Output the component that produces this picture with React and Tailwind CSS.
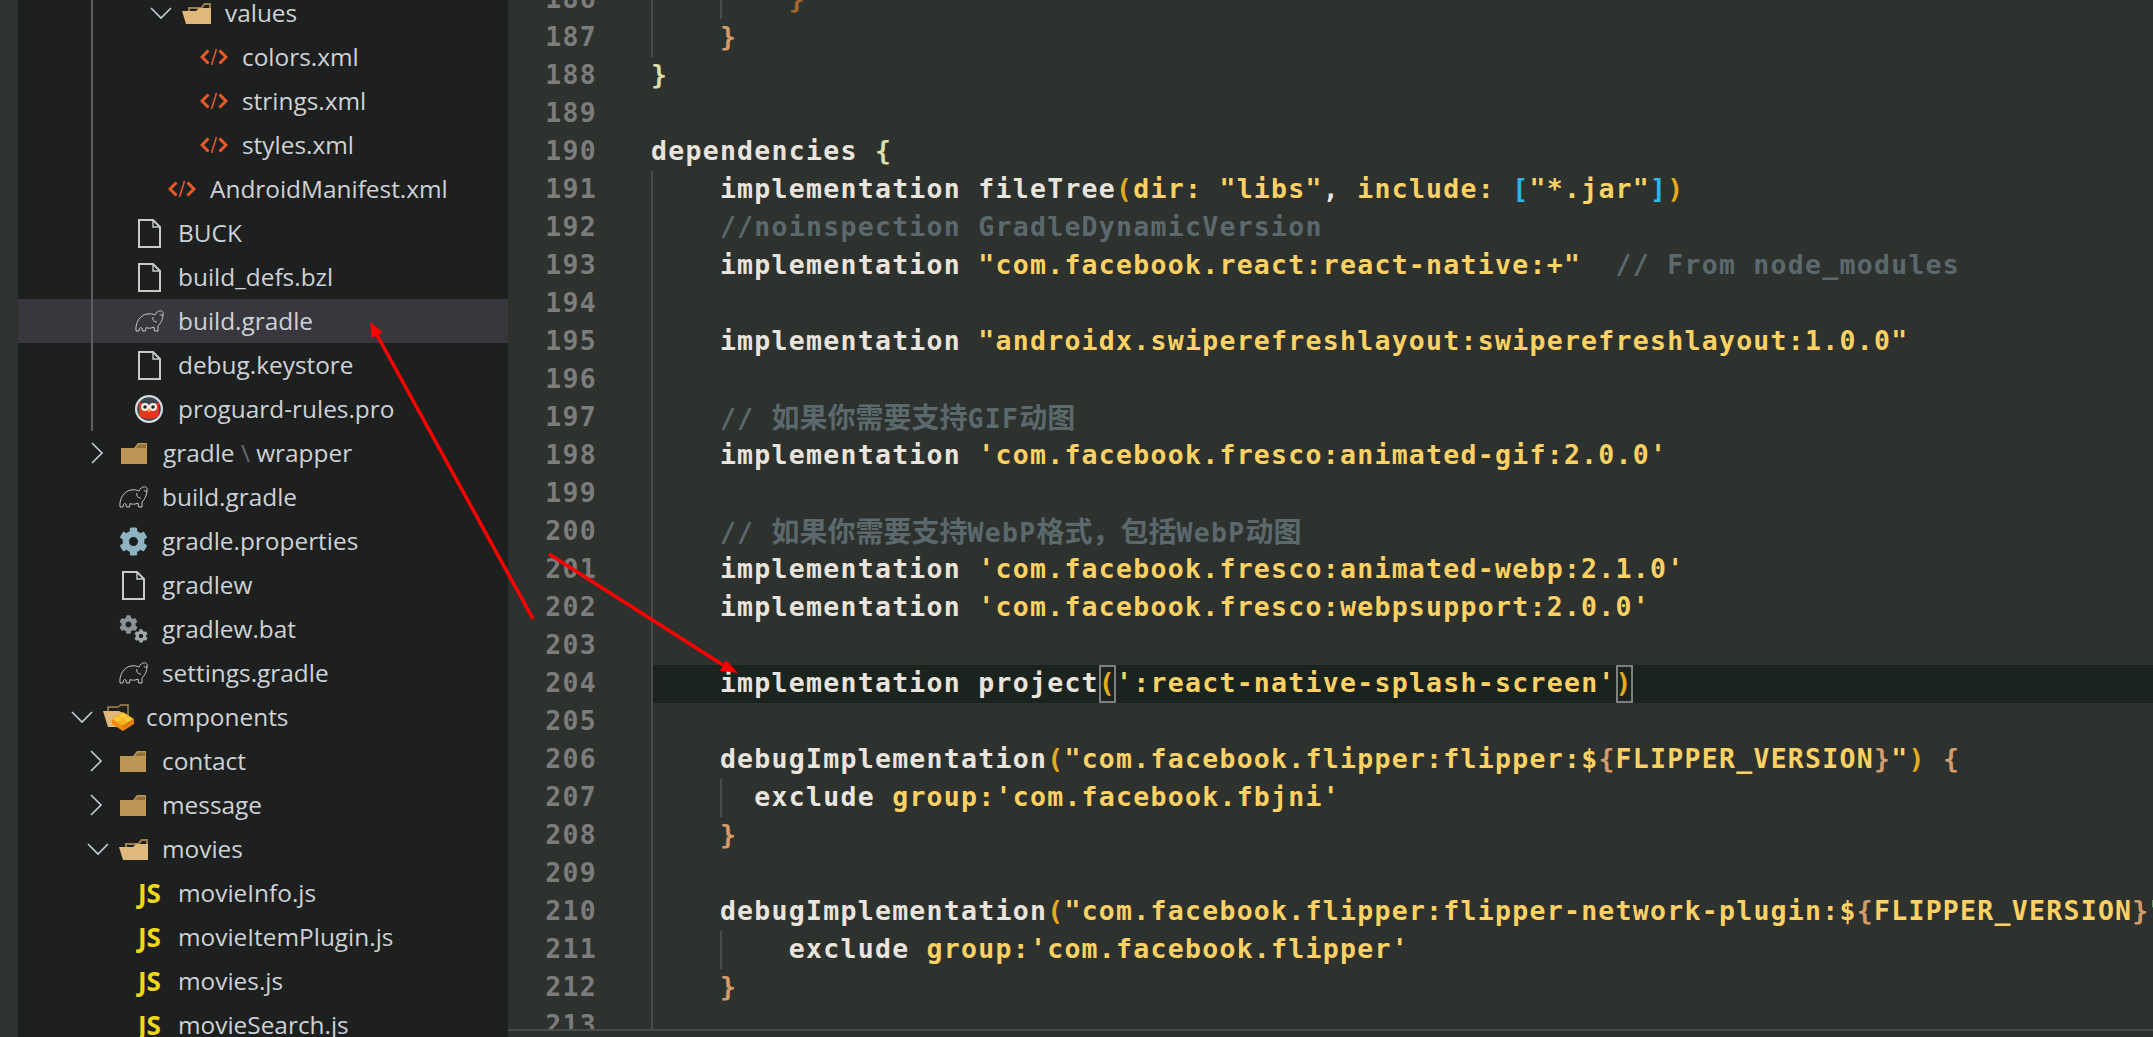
import React from "react";
import { FaCog } from "react-icons/fa";

const Chevron = ({ open }) => (
  <svg width="22" height="22" viewBox="0 0 22 22" fill="none" stroke="#c3ced4" strokeWidth="1.6">
    {open ? <path d="M1 6l10 10L21 6" /> : <path d="M4 1l10 10L4 21" />}
  </svg>
);
const ClosedFolder = () => (
  <svg width="26" height="22" viewBox="0 0 26 22" className="ml-[1px]">
    <path d="M0 6h13l4-5h9v21H0z" fill="#bd9555" />
    <path d="M15 6l3-3.600h7V6z" fill="#8f7140" />
  </svg>
);
const OpenFolder = () => (
  <svg width="30" height="23" viewBox="0 0 30 23">
    <path d="M6 9V5h13l3-4h7v21H6z" fill="#9b7d4a" />
    <path d="M8 9V7h12l3-4h4v6z" fill="#1e2020" />
    <path d="M0 9h14l3-3h12v16H4z" fill="#dfb97c" />
  </svg>
);
const FileIcon = () => (
  <svg width="23" height="29" viewBox="0 0 23 29" fill="none" stroke="#c9cbcb" strokeWidth="2" className="ml-[3px]">
    <path d="M1 1h14l7 7v20H1z" />
    <path d="M15 1v7h7" strokeWidth="1.400" />
  </svg>
);
const Elephant = () => (
  <svg width="29" height="22" viewBox="0 0 29 22" fill="none" stroke="#c6c8c8" strokeWidth="1">
    <path d="M1 21C0 13 5 5 12 4c3-.5 6 0 8 1 1-2.500 3-4.200 5.500-4.200C28 .8 29 3.500 27.500 5c-1 1-2.700.2-2.200-1.200" />
    <path d="M28 4c0 6-3 10-5 12v5h-3.500l-.5-4c-3 1.500-6 1.500-8 .5l-.5 3.500h-3L7 18c-1-.5-2-.5-2.500.5L4 21H1" />
    <path d="M18 7c-1 3 1 5 4 5" />
  </svg>
);
const XmlIcon = () => (
  <svg width="28" height="18" viewBox="0 0 28 18" fill="none" stroke="#e8592a" className="ml-[1px]">
    <path d="M8.500 2.500L2 9l6.500 6.500M19.500 2.500L26 9l-6.500 6.500" strokeWidth="3" />
    <path d="M16.500 1L11.500 17" strokeWidth="1.600" />
  </svg>
);
const Owl = () => (
  <svg width="28" height="28" viewBox="0 0 28 28">
    <circle cx="14" cy="14" r="14" fill="#d5dde2" />
    <circle cx="14" cy="14" r="11.800" fill="#3a4650" />
    <path d="M4 7l5 2h10l5-2v13c-2 5-18 5-20 0z" fill="#ea3220" />
    <circle cx="10" cy="12" r="4" fill="#f4f0e6" />
    <circle cx="18" cy="12" r="4" fill="#f4f0e6" />
    <circle cx="10" cy="12" r="1.800" fill="#222" />
    <circle cx="18" cy="12" r="1.800" fill="#222" />
    <path d="M12.500 15h3L14 18z" fill="#f6b420" />
  </svg>
);
const Gears = () => (
  <div className="relative h-[28px] w-[29px]">
    <FaCog size={19} color="#8e9294" className="absolute left-0 top-0" />
    <FaCog size={14} color="#a2a6a8" className="absolute right-0 bottom-0" />
  </div>
);
const Lego = () => (
  <svg width="32" height="27" viewBox="0 0 32 27">
    <path d="M5 6V3h10l3-2h7v11H5z" fill="none" stroke="#a58650" strokeWidth="1.500" />
    <path d="M0 7h16l8 4-6 12H5z" fill="#dfb97c" />
    <path d="M9 15l11-7 11 7-11 7z" fill="#f5b51c" />
    <path d="M9 15v5l11 7v-5z" fill="#f08c12" />
    <path d="M31 15v5l-11 7v-5z" fill="#e97f10" />
    <ellipse cx="20" cy="11.500" rx="3.500" ry="2" fill="#ffc93a" />
    <ellipse cx="15" cy="15" rx="3.500" ry="2" fill="#ffc93a" />
    <ellipse cx="25" cy="15" rx="3.500" ry="2" fill="#ffc93a" />
  </svg>
);
const Js = () => (
  <span className="ml-[3px] font-['Open_Sans'] text-[26px] font-bold leading-none text-[#f1d816]">JS</span>
);

const I = {
  closed: <ClosedFolder />,
  open: <OpenFolder />,
  file: <FileIcon />,
  gradle: <Elephant />,
  xml: <XmlIcon />,
  owl: <Owl />,
  gear: <FaCog size={29} color="#90b3c3" />,
  gears: <Gears />,
  lego: <Lego />,
  js: <Js />,
};

const files = [
  { t: "values", pl: "pl-[132px]", c: "open", i: "open" },
  { t: "colors.xml", pl: "pl-[149px]", i: "xml" },
  { t: "strings.xml", pl: "pl-[149px]", i: "xml" },
  { t: "styles.xml", pl: "pl-[149px]", i: "xml" },
  { t: "AndroidManifest.xml", pl: "pl-[117px]", i: "xml" },
  { t: "BUCK", pl: "pl-[85px]", i: "file" },
  { t: "build_defs.bzl", pl: "pl-[85px]", i: "file" },
  { t: "build.gradle", pl: "pl-[85px]", i: "gradle", sel: true },
  { t: "debug.keystore", pl: "pl-[85px]", i: "file" },
  { t: "proguard-rules.pro", pl: "pl-[85px]", i: "owl" },
  { t: "gradle", t2: "wrapper", pl: "pl-[70px]", c: "closed", i: "closed" },
  { t: "build.gradle", pl: "pl-[69px]", i: "gradle" },
  { t: "gradle.properties", pl: "pl-[69px]", i: "gear" },
  { t: "gradlew", pl: "pl-[69px]", i: "file" },
  { t: "gradlew.bat", pl: "pl-[69px]", i: "gears" },
  { t: "settings.gradle", pl: "pl-[69px]", i: "gradle" },
  { t: "components", pl: "pl-[53px]", c: "open", i: "lego" },
  { t: "contact", pl: "pl-[69px]", c: "closed", i: "closed" },
  { t: "message", pl: "pl-[69px]", c: "closed", i: "closed" },
  { t: "movies", pl: "pl-[69px]", c: "open", i: "open" },
  { t: "movieInfo.js", pl: "pl-[85px]", i: "js" },
  { t: "movieItemPlugin.js", pl: "pl-[85px]", i: "js" },
  { t: "movies.js", pl: "pl-[85px]", i: "js" },
  { t: "movieSearch.js", pl: "pl-[85px]", i: "js" },
];

const W = "text-[#e9e4dd]";
const Y = "text-[#fdd163]";
const G = "text-[#e5ab1c]";
const T = "text-[#d29b6b]";
const P = "text-[#dcdfa6]";
const C = "text-[#5b696d]";
const B = "text-[#29b8e8]";
const D = "text-[#a5682c]";
const Z = "font-['Noto_Sans_CJK_SC','DejaVu_Sans_Mono',sans-serif] text-[28px] tracking-normal";

const impl = ["    implementation ", W];
const lines = [
  { n: 186, g: [0, 4], s: [["        }", D]] },
  { n: 187, g: [0], s: [["    }", T]] },
  { n: 188, s: [["}", P]] },
  { n: 189 },
  { n: 190, s: [["dependencies ", W], ["{", P]] },
  { n: 191, g: [0], s: [impl, ["fileTree", W], ["(", G], ['dir: "libs"', Y], [", ", W], ["include: ", Y], ["[", B], ['"*.jar"', Y], ["]", B], [")", G]] },
  { n: 192, g: [0], s: [["    //noinspection GradleDynamicVersion", C]] },
  { n: 193, g: [0], s: [impl, ['"com.facebook.react:react-native:+"', Y], ["  // From node_modules", C]] },
  { n: 194, g: [0] },
  { n: 195, g: [0], s: [impl, ['"androidx.swiperefreshlayout:swiperefreshlayout:1.0.0"', Y]] },
  { n: 196, g: [0] },
  { n: 197, g: [0], s: [["    // ", C], ["如果你需要支持", C + " " + Z], ["GIF", C], ["动图", C + " " + Z]] },
  { n: 198, g: [0], s: [impl, ["'com.facebook.fresco:animated-gif:2.0.0'", Y]] },
  { n: 199, g: [0] },
  { n: 200, g: [0], s: [["    // ", C], ["如果你需要支持", C + " " + Z], ["WebP", C], ["格式，包括", C + " " + Z], ["WebP", C], ["动图", C + " " + Z]] },
  { n: 201, g: [0], s: [impl, ["'com.facebook.fresco:animated-webp:2.1.0'", Y]] },
  { n: 202, g: [0], s: [impl, ["'com.facebook.fresco:webpsupport:2.0.0'", Y]] },
  { n: 203, g: [0] },
  { n: 204, g: [0], cur: true, s: [impl, ["project", W], ["(", G, true], ["':react-native-splash-screen'", Y], [")", G, true]] },
  { n: 205, g: [0] },
  { n: 206, g: [0], s: [["    debugImplementation", W], ["(", G], ['"com.facebook.flipper:flipper:$', Y], ["{", T], ["FLIPPER_VERSION", Y], ["}", T], ['"', Y], [")", G], [" {", T]] },
  { n: 207, g: [0, 4], s: [["      exclude ", W], ["group:'com.facebook.fbjni'", Y]] },
  { n: 208, g: [0], s: [["    }", T]] },
  { n: 209, g: [0] },
  { n: 210, g: [0], s: [["    debugImplementation", W], ["(", G], ['"com.facebook.flipper:flipper-network-plugin:$', Y], ["{", T], ["FLIPPER_VERSION", Y], ["}", T], ['"', Y], [")", G], [" {", T]] },
  { n: 211, g: [0, 4], s: [["        exclude ", W], ["group:'com.facebook.flipper'", Y]] },
  { n: 212, g: [0], s: [["    }", T]] },
  { n: 213, g: [0] },
];

const guideClass = { 0: "left-0", 4: "left-[69px]" };

export default function App() {
  return (
    <div className="relative flex h-[1037px] w-[2153px] overflow-hidden bg-[#2d322f]">
      <div className="w-[18px] shrink-0 bg-[#2d332e]" />
      <aside className="relative w-[490px] shrink-0 overflow-hidden bg-[#1e2020] font-['Open_Sans',sans-serif] text-[24.400px] text-[#cdd2d6]">
        <div className="absolute left-[73px] top-0 h-[431px] w-[2px] bg-[#5c5e60]" />
        <div className="-mt-[9px] flex flex-col">
          {files.map((f, idx) => (
            <div key={idx} className={`flex h-[44px] items-center ${f.pl} ${f.sel ? "bg-[#38373e]" : ""}`}>
              <div className="flex w-[32px] shrink-0 items-center">{f.c ? <Chevron open={f.c === "open"} /> : null}</div>
              <div className="flex w-[43px] shrink-0 items-center">{I[f.i]}</div>
              <span className="mt-[1px] whitespace-pre leading-none">
                {f.t}
                {f.t2 ? <span className="text-[#6a6c6e]"> \ </span> : null}
                {f.t2}
              </span>
            </div>
          ))}
        </div>
      </aside>
      <main className="flex min-w-0 flex-1 flex-col">
        <div className="min-h-0 flex-1 overflow-hidden">
          <div className="-mt-[19px] flex flex-col font-['DejaVu_Sans_Mono',monospace] text-[26.500px] font-bold leading-[35px] tracking-[1.270px]">
            {lines.map((l) => (
              <div key={l.n} className="flex h-[38px]">
                <div className="w-[89px] shrink-0 text-right text-[#7b7c7b]">{l.n}</div>
                <div className="w-[54px] shrink-0" />
                <div className={`relative min-w-0 flex-1 whitespace-pre ${l.cur ? "bg-[#1b231e]" : ""}`}>
                  {(l.g || []).map((g) => (
                    <div key={g} className={`absolute top-0 h-[38px] w-[2px] bg-[#484d49] ${guideClass[g]}`} />
                  ))}
                  {(l.s || []).map((s, i) => (
                    <span
                      key={i}
                      className={`${s[1]} ${s[2] ? "inline-block h-[38px] align-top shadow-[inset_0_0_0_2px_#7c7f7d]" : ""}`}
                    >
                      {s[0]}
                    </span>
                  ))}
                </div>
              </div>
            ))}
          </div>
        </div>
        <div className="h-[2px] shrink-0 bg-[#474c48]" />
        <div className="h-[6px] shrink-0 bg-[#2d322f]" />
      </main>
      <svg className="pointer-events-none absolute inset-0" width="2153" height="1037" fill="none">
        <path d="M533 619L377 335" stroke="#ff0000" strokeWidth="3.500" />
        <path d="M370 322L382.500 332.200L371.900 338z" fill="#ff0000" />
        <path d="M549 554L723 665" stroke="#ff0000" strokeWidth="3.500" />
        <path d="M738 673L726 660L720 670.700z" fill="#ff0000" />
      </svg>
    </div>
  );
}
